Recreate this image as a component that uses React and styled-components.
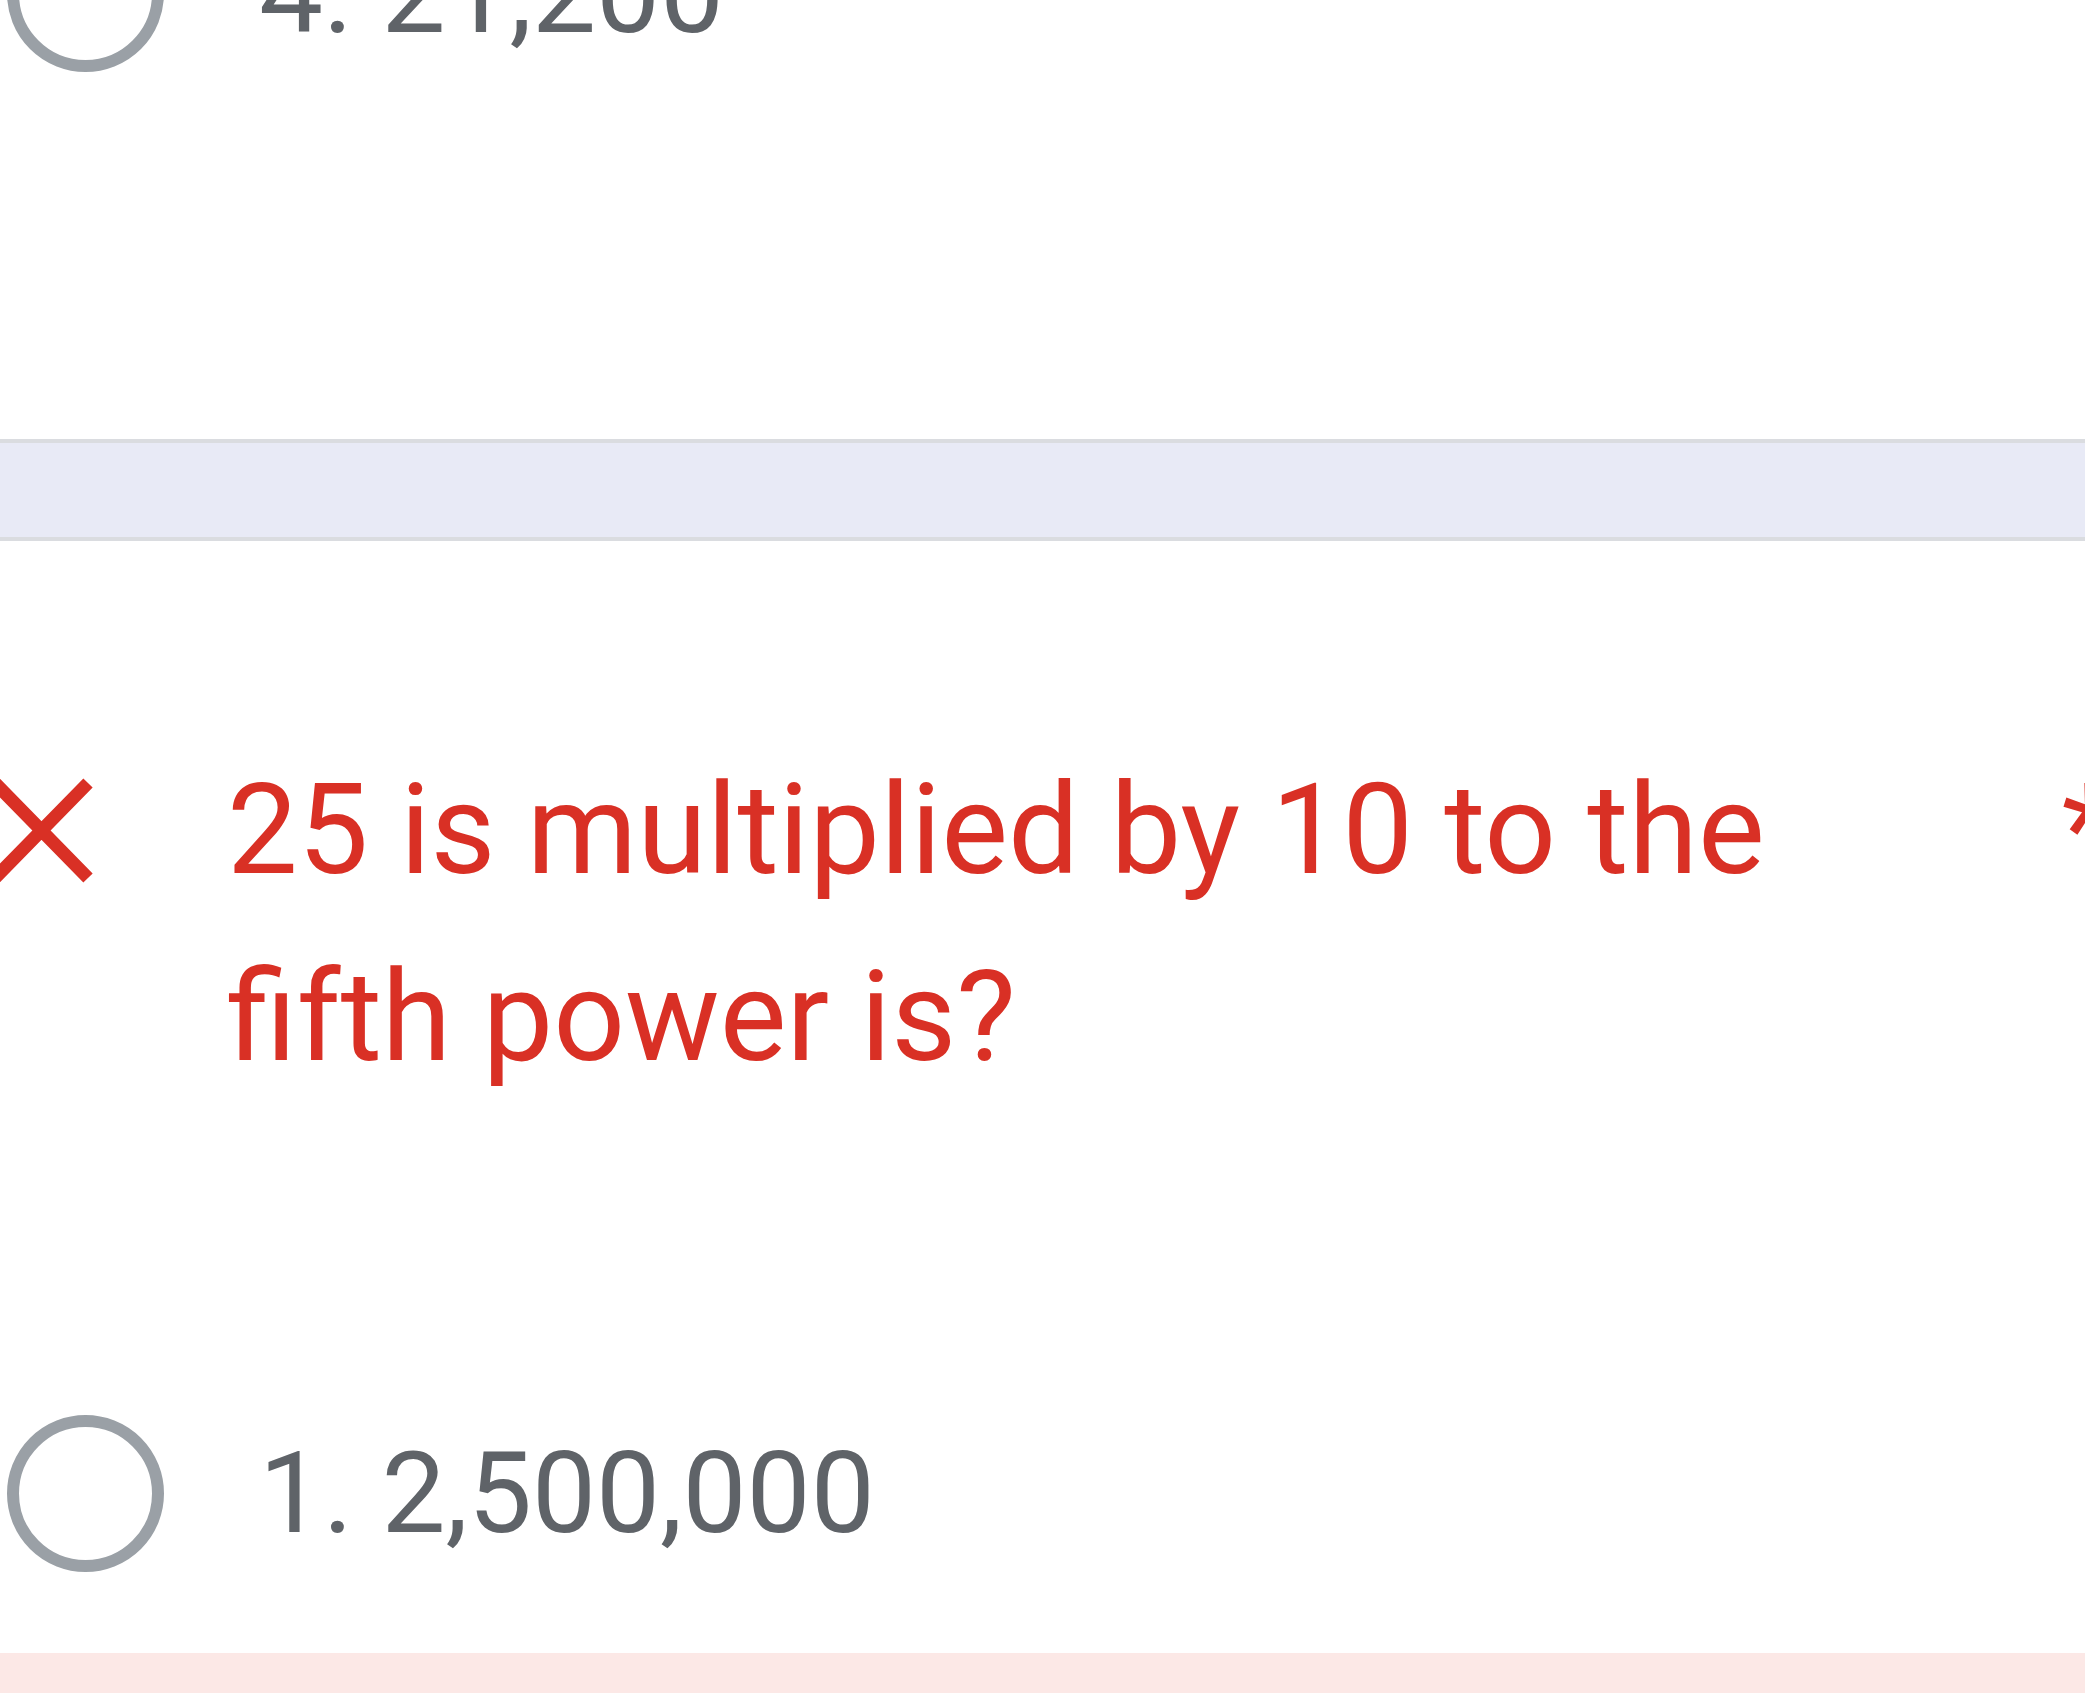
import styled, { createGlobalStyle } from "styled-components";

const GlobalStyle = createGlobalStyle`
  html, body {
    margin: 0;
    padding: 0;
    background: #ffffff;
    overflow: hidden;
  }
  body {
    font-family: Roboto, "Noto Sans", Arial, sans-serif;
  }
`;

const Page = styled.div`
  width: 2085px;
  height: 1693px;
  overflow: hidden;
  display: flex;
  flex-direction: column;
  background: #ffffff;
`;

const Card = styled.section`
  display: flex;
  flex-direction: column;
  margin-top: ${(p) => p.offset || 0}px;
  padding-top: ${(p) => p.padTop || 0}px;
  padding-bottom: ${(p) => p.padBottom || 0}px;
`;

const Divider = styled.div`
  height: 94px;
  background: #e8eaf6;
  border-top: 4px solid #dadce0;
  border-bottom: 4px solid #dadce0;
  flex-shrink: 0;
`;

const OptionRow = styled.label`
  display: flex;
  align-items: center;
  height: 160px;
  padding-left: 7px;
`;

const Radio = styled.span`
  width: 157px;
  height: 157px;
  box-sizing: border-box;
  border: 12px solid #9aa0a6;
  border-radius: 50%;
  flex-shrink: 0;
`;

const OptionText = styled.span`
  margin-left: 95px;
  font-size: 114px;
  line-height: 1;
  color: #5f6368;
  white-space: nowrap;
`;

const QuestionRow = styled.div`
  display: flex;
  align-items: flex-start;
  width: 2085px;
`;

const WrongMark = styled.svg`
  width: 110px;
  height: 110px;
  margin-left: -14px;
  margin-top: 39px;
  flex-shrink: 0;
`;

const QuestionText = styled.div`
  width: 1700px;
  margin-left: 131px;
  font-size: 126px;
  line-height: 187px;
  color: #d93025;
`;

const Required = styled.span`
  margin-left: auto;
  margin-right: -31px;
  font-size: 126px;
  line-height: 187px;
  color: #d93025;
  flex-shrink: 0;
`;

const Footer = styled.div`
  flex: 1;
  background: #fce8e6;
`;

const App = () => {
  return (
    <Page>
      <GlobalStyle />
      <Card offset={-87} padBottom={366}>
        <OptionRow>
          <Radio />
          <OptionText>4. 21,200</OptionText>
        </OptionRow>
      </Card>
      <Divider />
      <Card padTop={196} padBottom={302}>
        <QuestionRow>
          <WrongMark viewBox="0 0 110 110">
            <path
              d="M9 7 L102 102 M102 7 L9 102"
              stroke="#d93025"
              strokeWidth="13"
              fill="none"
            />
          </WrongMark>
          <QuestionText>25 is multiplied by 10 to the fifth power is?</QuestionText>
          <Required>*</Required>
        </QuestionRow>
      </Card>
      <Card>
        <OptionRow>
          <Radio />
          <OptionText>1. 2,500,000</OptionText>
        </OptionRow>
      </Card>
      <Card padBottom={80} />
      <Footer />
    </Page>
  );
};

export default App;
